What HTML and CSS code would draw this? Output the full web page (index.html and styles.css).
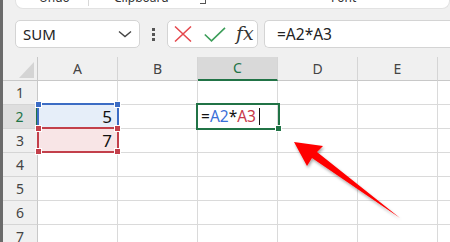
FILE: index.html
```html
<!DOCTYPE html>
<html>
<head>
    <title>Formula bar</title>
    <link rel="stylesheet" href="styles.css">
</head>
<body>
    <div class="window">
        <div class="ribbon">
            <div class="ribbon-box">
                <span class="group undo">Undo</span>
                <span class="group clip">Clipboard</span>
                <span class="launcher"></span>
                <span class="group font">Font</span>
            </div>
        </div>

        <div class="formula-bar">
            <div class="name-box">
                <span>SUM</span>
                <svg width="14" height="8" viewBox="0 0 14 8"><path d="M1 1.5 L7 6.5 L13 1.5" fill="none" stroke="#444" stroke-width="1.4"/></svg>
            </div>
            <div class="grip"><i></i><i></i><i></i></div>
            <div class="fx-buttons">
                <svg class="cancel" width="18" height="16" viewBox="0 0 18 16"><path d="M1 0.5 L17 15.5 M17 0.5 L1 15.5" stroke="#e5484d" stroke-width="1.5" fill="none"/></svg>
                <svg class="enter" width="22" height="15" viewBox="0 0 22 15"><path d="M0.8 7.5 L7.5 13.8 L21 0.8" stroke="#3d9e5a" stroke-width="1.6" fill="none"/></svg>
                <span class="fx">fx</span>
            </div>
            <div class="formula-input">=A2*A3</div>
        </div>

        <div class="sheet">
            <div class="corner"><span></span></div>
            <div class="col-head">A</div>
            <div class="col-head">B</div>
            <div class="col-head active">C</div>
            <div class="col-head">D</div>
            <div class="col-head">E</div>
            <div class="col-head">F</div>

            <div class="row-head">1</div>
            <div class="cell"></div><div class="cell"></div><div class="cell"></div><div class="cell"></div><div class="cell"></div><div class="cell"></div>

            <div class="row-head active">2</div>
            <div class="cell num ref-blue">5</div><div class="cell"></div>
            <div class="cell edit"><span>=</span><span class="blue">A2</span><span>*</span><span class="red">A3</span><span class="caret"></span></div>
            <div class="cell"></div><div class="cell"></div><div class="cell"></div>

            <div class="row-head">3</div>
            <div class="cell num ref-red">7</div><div class="cell"></div><div class="cell"></div><div class="cell"></div><div class="cell"></div><div class="cell"></div>

            <div class="row-head">4</div>
            <div class="cell"></div><div class="cell"></div><div class="cell"></div><div class="cell"></div><div class="cell"></div><div class="cell"></div>
            <div class="row-head">5</div>
            <div class="cell"></div><div class="cell"></div><div class="cell"></div><div class="cell"></div><div class="cell"></div><div class="cell"></div>
            <div class="row-head">6</div>
            <div class="cell"></div><div class="cell"></div><div class="cell"></div><div class="cell"></div><div class="cell"></div><div class="cell"></div>
            <div class="row-head">7</div>
            <div class="cell"></div><div class="cell"></div><div class="cell"></div><div class="cell"></div><div class="cell"></div><div class="cell"></div>

            <!-- range outlines drawn over the grid -->
            <div class="range blue-range"><b class="h tl"></b><b class="h tr"></b></div>
            <div class="range red-range"><b class="h tl"></b><b class="h tr"></b><b class="h bl"></b><b class="h br"></b></div>
            <div class="active-cell"><b class="fill-handle"></b></div>
        </div>

        <svg class="arrow" width="450" height="242" viewBox="0 0 450 242">
            <defs>
                <filter id="shadow" x="-20%" y="-20%" width="140%" height="140%">
                    <feDropShadow dx="1" dy="2" stdDeviation="1.6" flood-color="#000" flood-opacity="0.35"/>
                </filter>
            </defs>
            <polygon points="294,142 323,146 317,152 400,218 312,158 307,166" fill="#ff0000" filter="url(#shadow)"/>
        </svg>
    </div>
</body>
</html>
```

FILE: styles.css
```css
body {
    margin: 0;
    overflow: hidden;
    font-family: "Noto Sans", "Open Sans", sans-serif;
    background: #f0f0f0;
}
.window {
    position: relative;
    width: 447px;
    height: 242px;
    border-left: 3px solid #6b6b6b;
    background: #f0f0f0;
    overflow: hidden;
}

/* ribbon remains at the very top */
.ribbon {
    height: 9px;
    overflow: hidden;
}
.ribbon-box {
    display: flex;
    align-items: flex-start;
    margin-left: 12px;
    height: 8px;
    background: #fff;
    border: 1px solid #e2e2e2;
    border-top: none;
    border-radius: 0 0 8px 8px;
    font-size: 12px;
    line-height: 12px;
    color: #333;
}
.group {
    margin-top: -8px;
}
.undo {
    width: 73px;
    padding-left: 23px;
    box-sizing: border-box;
    border-right: 1px solid #d8d8d8;
    height: 14px;
}
.clip {
    margin-left: 25px;
    width: 86px;
}
.launcher {
    width: 5px;
    height: 3px;
    border-right: 1px solid #555;
    border-bottom: 1px solid #555;
}
.font {
    margin-left: 125px;
}

.formula-bar {
    display: flex;
    align-items: center;
    height: 48px;
    padding: 11px 0 9px 12px;
    box-sizing: border-box;
}
.name-box {
    display: flex;
    align-items: center;
    justify-content: space-between;
    width: 125px;
    height: 28px;
    box-sizing: border-box;
    padding: 0 7px 0 7px;
    background: #fff;
    border: 1px solid #d4d4d4;
    border-radius: 5px;
    font-size: 15px;
    color: #222;
}
.grip {
    display: flex;
    flex-direction: column;
    gap: 2px;
    margin: 0 12px;
}
.grip i {
    width: 3px;
    height: 3px;
    background: #555;
}
.fx-buttons {
    display: flex;
    align-items: center;
    width: 91px;
    height: 28px;
    box-sizing: border-box;
    padding-left: 6px;
    background: #fff;
    border: 1px solid #d4d4d4;
    border-radius: 5px;
}
.enter {
    margin-left: 12px;
}
.fx {
    margin-left: 10px;
    font-family: "DejaVu Serif", serif;
    font-style: italic;
    font-size: 19px;
    color: #333;
    line-height: 20px;
    margin-top: -3px;
}
.formula-input {
    flex: 1;
    margin-left: 6px;
    height: 28px;
    box-sizing: border-box;
    padding-left: 12px;
    background: #fff;
    border: 1px solid #d4d4d4;
    border-right: none;
    border-radius: 5px 0 0 5px;
    font-size: 15.5px;
    line-height: 26px;
    color: #222;
}

/* grid */
.sheet {
    position: relative;
    display: grid;
    grid-template-columns: 35px repeat(6, 80px);
    grid-auto-rows: 24px;
    background: #fff;
}
.sheet > div {
    box-sizing: border-box;
}
.corner {
    position: relative;
    background: #f0f0f0;
    border-right: 1px solid #c8c8c8;
    border-bottom: 1px solid #c8c8c8;
}
.corner span {
    position: absolute;
    right: 3px;
    bottom: 2px;
    width: 0;
    height: 0;
    border-left: 15px solid transparent;
    border-bottom: 16px solid #d4d4d4;
}
.col-head {
    background: #f0f0f0;
    border-right: 1px solid #d5d5d5;
    border-bottom: 1px solid #c8c8c8;
    text-align: center;
    font-size: 14px;
    line-height: 23px;
    color: #444;
}
.col-head.active {
    background: #d9d9d9;
    color: #217346;
    border-bottom: 2px solid #217346;
    line-height: 22px;
}
.row-head {
    background: #f0f0f0;
    border-right: 1px solid #c8c8c8;
    border-bottom: 1px solid #d5d5d5;
    text-align: center;
    font-size: 14px;
    line-height: 23px;
    color: #444;
}
.row-head.active {
    background: #dedede;
    color: #217346;
    border-right: 2px solid #217346;
}
.cell {
    border-right: 1px solid #dadada;
    border-bottom: 1px solid #dadada;
    font-size: 17px;
    line-height: 23px;
    color: #111;
}
.num {
    text-align: right;
    padding-right: 5px;
}
.ref-blue {
    background: #e6eef9;
}
.ref-red {
    background: #f8e5e6;
}
.edit {
    display: flex;
    align-items: center;
    padding-left: 3px;
    font-size: 15.5px;
}
.blue {
    color: #3a6fd8;
}
.red {
    color: #c8384a;
}
.caret {
    width: 1px;
    height: 17px;
    margin-left: 3px;
    background: #111;
}

.range {
    position: absolute;
    left: 34px;
    width: 82px;
    height: 26px;
    box-sizing: border-box;
    border: 2px solid;
}
.blue-range {
    top: 46px;
    border-color: #3c6cc4;
}
.red-range {
    top: 70px;
    border-color: #c3404b;
}
.h {
    position: absolute;
    width: 5px;
    height: 5px;
    border: 1px solid #fff;
    box-sizing: content-box;
}
.blue-range .h { background: #3c6cc4; }
.red-range .h { background: #c3404b; }
.tl { left: -4px; top: -4px; }
.tr { right: -4px; top: -4px; }
.bl { left: -4px; bottom: -4px; }
.br { right: -4px; bottom: -4px; }

.active-cell {
    position: absolute;
    left: 193px;
    top: 46px;
    width: 84px;
    height: 27px;
    box-sizing: border-box;
    border: 2px solid #217346;
}
.fill-handle {
    position: absolute;
    right: -4px;
    bottom: -4px;
    width: 5px;
    height: 5px;
    background: #217346;
    border: 1px solid #fff;
}

.arrow {
    position: absolute;
    left: -3px;
    top: 0;
}
```
